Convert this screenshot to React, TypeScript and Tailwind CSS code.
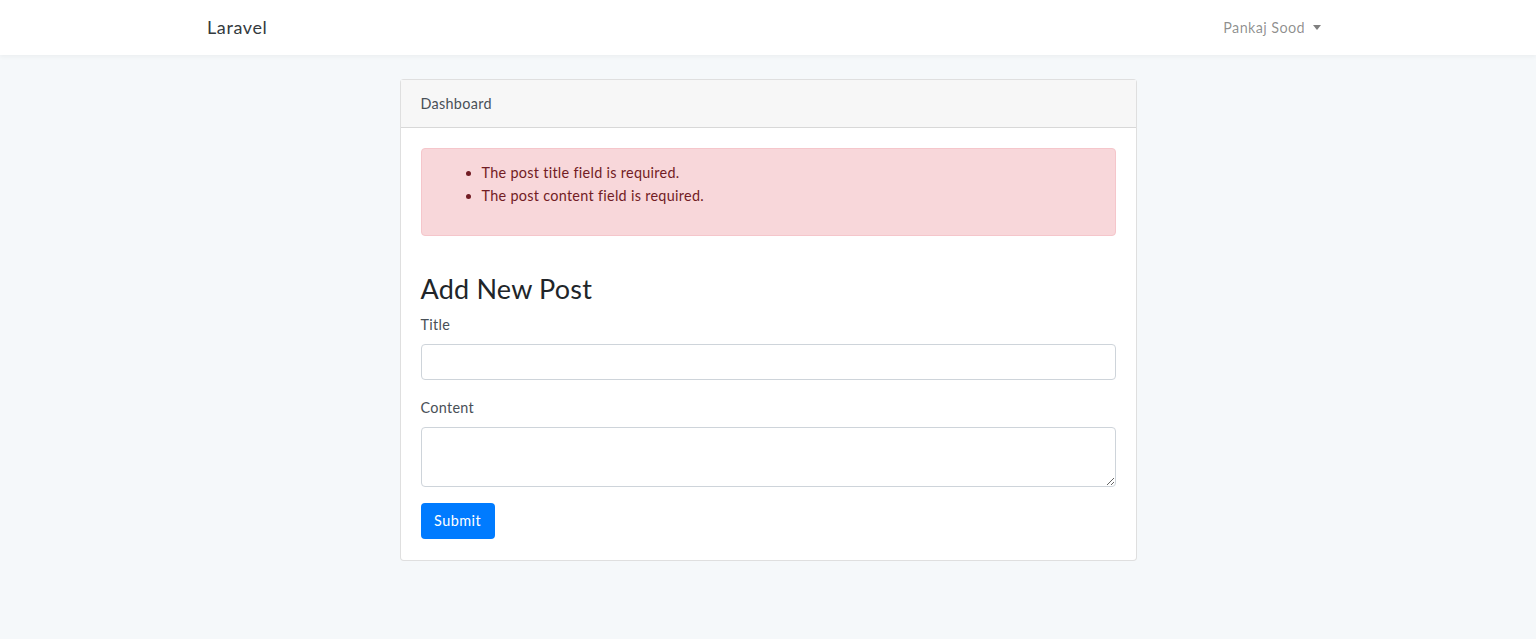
import { useState } from "react";

const font = { fontFamily: "Lato, 'Open Sans', sans-serif" };

const App = () => {
  const [title, setTitle] = useState("");
  const [content, setContent] = useState("");

  return (
    <div
      className="min-h-screen bg-[#f5f8fa] text-[14.4px] leading-[1.6] tracking-[0.3px] text-[#343a40]"
      style={font}
    >
      {/* Navbar */}
      <nav className="h-[55px] bg-white shadow-[0_2px_4px_rgba(0,0,0,0.04)]">
        <div className="mx-auto flex h-full w-[1122px] items-center justify-between pr-[8px]">
          <a href="#" className="text-[18px] tracking-[0.6px] text-[#343a40]">
            Laravel
          </a>
          <button className="flex items-center gap-[8px] text-[14.4px] tracking-[0.4px] text-[rgba(0,0,0,0.45)]">
            Pankaj Sood
            <span className="mt-[1px] h-0 w-0 border-x-[4.5px] border-t-[5px] border-x-transparent border-t-[rgba(0,0,0,0.5)]" />
          </button>
        </div>
      </nav>

      <main className="pt-[24px]">
        <div className="mx-auto w-[737px] rounded-[4px] border border-[rgba(0,0,0,0.125)] bg-white">
          <div className="border-b border-[rgba(0,0,0,0.125)] bg-[#f7f7f7] px-[20px] py-[12px] text-[#495057]">
            Dashboard
          </div>

          <div className="px-[20px] pt-[20px] pb-[21px]">
            {/* Errors */}
            <div className="rounded-[4px] border border-[#f5c6cb] bg-[#f8d7da] px-[20px] py-[12px] text-[#721c24]">
              <ul className="mb-[16px] list-disc pl-[40px]">
                <li>The post title field is required.</li>
                <li>The post content field is required.</li>
              </ul>
            </div>

            <h2 className="mt-[37px] mb-[7px] text-[27px] leading-[1.2] tracking-[0.2px] text-[#212529]">
              Add New Post
            </h2>

            <form onSubmit={(e) => e.preventDefault()}>
              <div className="mb-[16px]">
                <label className="mb-[8px] block text-[#495057]">Title</label>
                <input
                  value={title}
                  onChange={(e) => setTitle(e.target.value)}
                  className="block h-[36px] w-full rounded-[4px] border border-[#ced4da] px-[12px] outline-none"
                />
              </div>
              <div className="mb-[16px]">
                <label className="mb-[8px] block text-[#495057]">Content</label>
                <textarea
                  value={content}
                  onChange={(e) => setContent(e.target.value)}
                  className="block h-[60px] w-full rounded-[4px] border border-[#ced4da] px-[12px] py-[6px] outline-none"
                />
              </div>
              <button
                type="submit"
                className="h-[36px] rounded-[4px] bg-[#007bff] px-[13.5px] text-[14.4px] tracking-[0.5px] text-white"
              >
                Submit
              </button>
            </form>
          </div>
        </div>
      </main>
    </div>
  );
};

export default App;
